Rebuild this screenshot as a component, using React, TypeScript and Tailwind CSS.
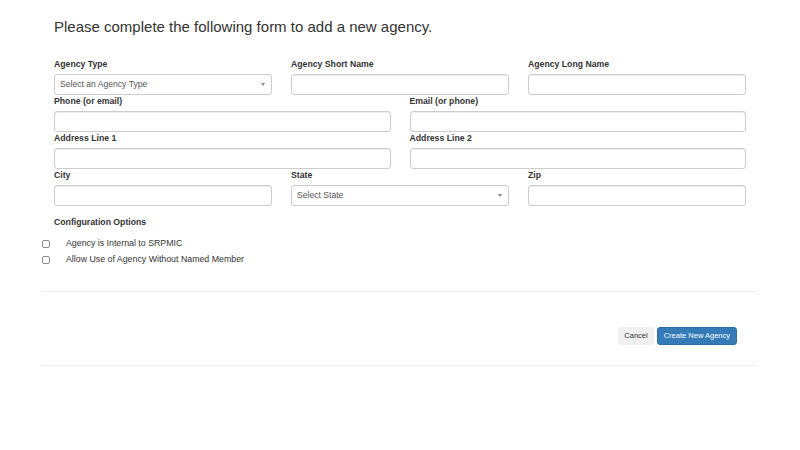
const font = { fontFamily: '"Liberation Sans", Arial, sans-serif' };

function Label({ children }: { children: React.ReactNode }) {
    return <div className="h-[12px] text-[8.7px] leading-[12px] font-bold text-[#333] mb-[4px]">{children}</div>;
}

function TextInput() {
    return <div className="h-[21px] rounded-[3px] border border-[#ccc] bg-white shadow-[inset_0_1px_1px_rgba(0,0,0,0.075)]" />;
}

function SelectBox({ placeholder }: { placeholder: string }) {
    return (
        <div className="h-[21px] rounded-[3px] border border-[#ccc] bg-white flex items-center justify-between pl-[5px] pr-[6px]">
            <span className="text-[8.6px] text-[#555]">{placeholder}</span>
            <span className="w-0 h-0 border-l-[2.5px] border-r-[2.5px] border-t-[3px] border-l-transparent border-r-transparent border-t-[#888]" />
        </div>
    );
}

function Field({ label, children }: { label: string; children: React.ReactNode }) {
    return (
        <div>
            <Label>{label}</Label>
            {children}
        </div>
    );
}

export default function App() {
    return (
        <div className="w-[800px] h-[450px] bg-white overflow-hidden" style={font}>
            <div className="ml-[42px] w-[715px]">
                <div className="pl-[12px] pr-[11px]">
                    <h1 className="pt-[16px] text-[15px] leading-[22px] text-[#333]">
                        Please complete the following form to add a new agency.
                    </h1>

                    <div className="mt-[20px] grid grid-cols-3 gap-x-[19px]">
                        <Field label="Agency Type">
                            <SelectBox placeholder="Select an Agency Type" />
                        </Field>
                        <Field label="Agency Short Name">
                            <TextInput />
                        </Field>
                        <Field label="Agency Long Name">
                            <TextInput />
                        </Field>
                    </div>

                    <div className="grid grid-cols-2 gap-x-[19px]">
                        <Field label="Phone (or email)">
                            <TextInput />
                        </Field>
                        <Field label="Email (or phone)">
                            <TextInput />
                        </Field>
                    </div>

                    <div className="grid grid-cols-2 gap-x-[19px]">
                        <Field label="Address Line 1">
                            <TextInput />
                        </Field>
                        <Field label="Address Line 2">
                            <TextInput />
                        </Field>
                    </div>

                    <div className="grid grid-cols-3 gap-x-[19px]">
                        <Field label="City">
                            <TextInput />
                        </Field>
                        <Field label="State">
                            <SelectBox placeholder="Select State" />
                        </Field>
                        <Field label="Zip">
                            <TextInput />
                        </Field>
                    </div>

                    <div className="mt-[10px] text-[8.7px] leading-[12px] font-bold text-[#333]">Configuration Options</div>
                </div>

                <div className="mt-[10px] flex flex-col gap-[4px]">
                    {['Agency is Internal to SRPMIC', 'Allow Use of Agency Without Named Member'].map((text) => (
                        <div key={text} className="flex items-center h-[12px]">
                            <span className="w-[8px] h-[8px] rounded-[2px] border border-[#8a8a8a] bg-white" />
                            <span className="ml-[16px] text-[8.8px] text-[#333]">{text}</span>
                        </div>
                    ))}
                </div>

                <div className="mt-[25px] border-t border-[#eee]" />

                <div className="flex justify-end gap-[3px] pt-[35px] pr-[20px]">
                    <button className="h-[18px] px-[6px] rounded-[3px] bg-[#f0f0f0] text-[7.5px] text-[#333]">Cancel</button>
                    <button className="h-[18px] px-[6px] rounded-[3px] bg-[#337ab7] border border-[#2e6da4] text-[7.5px] text-white">
                        Create New Agency
                    </button>
                </div>

                <div className="mt-[20px] border-t border-[#eee]" />
            </div>
        </div>
    );
}
